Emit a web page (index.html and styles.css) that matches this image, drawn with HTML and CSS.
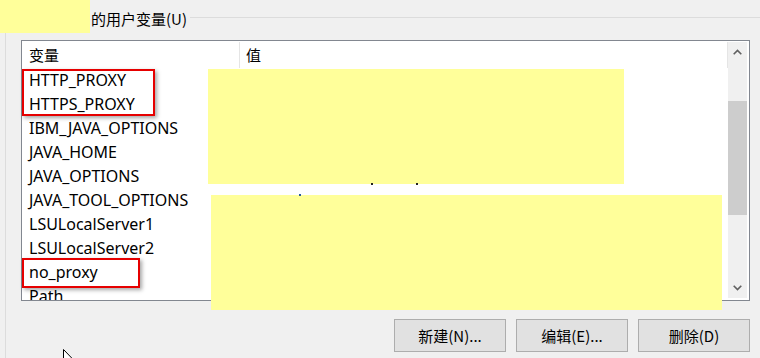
FILE: index.html
```html
<!DOCTYPE html>
<html lang="zh-CN">

<head>
    <meta charset="UTF-8">
    <meta name="viewport" content="width=device-width, initial-scale=1.0">
    <title>环境变量</title>
    <link rel="stylesheet" href="styles.css">
</head>

<body>
    <div class="screen">
        <div class="group">
            <div class="legend">的用户变量(U)</div>
            <div class="list">
                <div class="cols">
                    <div class="head">
                        <span class="c1">变量</span>
                        <span class="c2">值</span>
                    </div>
                    <ul class="rows">
                        <li>HTTP_PROXY</li>
                        <li>HTTPS_PROXY</li>
                        <li>IBM_JAVA_OPTIONS</li>
                        <li>JAVA_HOME</li>
                        <li>JAVA_OPTIONS</li>
                        <li>JAVA_TOOL_OPTIONS</li>
                        <li>LSULocalServer1</li>
                        <li>LSULocalServer2</li>
                        <li>no_proxy</li>
                        <li>Path</li>
                    </ul>
                </div>
                <div class="sb">
                    <div class="sb-btn">
                        <svg width="9" height="6" viewBox="0 0 9 6"><polyline points="0.7,5.3 4.5,1.5 8.3,5.3" fill="none" stroke="#606060" stroke-width="1.6"/></svg>
                    </div>
                    <div class="sb-track"><div class="sb-thumb"></div></div>
                    <div class="sb-btn">
                        <svg width="9" height="6" viewBox="0 0 9 6"><polyline points="0.7,0.7 4.5,4.5 8.3,0.7" fill="none" stroke="#606060" stroke-width="1.6"/></svg>
                    </div>
                </div>
            </div>
            <div class="btns">
                <button class="btn">新建(N)...</button>
                <button class="btn">编辑(E)...</button>
                <button class="btn">删除(D)</button>
            </div>
        </div>

        <!-- 遮挡块 -->
        <div class="mask m-name"></div>
        <div class="mask m-val1"></div>
        <div class="mask m-val2"></div>
        <span class="dot d1"></span>
        <span class="dot d2"></span>
        <span class="dot d3"></span>

        <!-- 红框标注 -->
        <div class="mark mark1"></div>
        <div class="mark mark2"></div>

        <svg class="cursor" width="13" height="20" viewBox="0 0 13 20">
            <path d="M0.5 0.5 L0.5 16 L4 12.6 L6.6 18.4 L9 17.3 L6.5 11.6 L11.2 11.6 Z" fill="#fff" stroke="#000" stroke-width="1"/>
        </svg>
    </div>
</body>

</html>
```

FILE: styles.css
```css
* {
    margin: 0;
    padding: 0;
    box-sizing: border-box;
}

body {
    background: #f0f0f0;
    font-family: "Noto Sans", "Noto Sans CJK SC", sans-serif;
    font-size: 15px;
    color: #000;
}

.screen {
    position: relative;
    width: 760px;
    height: 358px;
    overflow: hidden;
}

.group {
    position: relative;
    margin: 17px 0 0 5px;
    height: 341px;
    border-top: 1px solid #dcdcdc;
    border-left: 1px solid #dcdcdc;
}

.legend {
    position: absolute;
    top: -9px;
    left: 83px;
    height: 20px;
    line-height: 20px;
    padding: 0 3px 0 2px;
    background: #f0f0f0;
    font-family: "Noto Sans CJK SC", sans-serif;
}

.list {
    display: flex;
    width: 729px;
    height: 261px;
    margin: 22px 0 0 15px;
    border: 1px solid #828790;
    background: #fff;
    overflow: hidden;
}

.cols {
    flex: 1;
    overflow: hidden;
}

.head {
    display: flex;
    height: 27px;
}

.head span {
    margin-top: 1px;
    height: 26px;
    line-height: 26px;
    border-right: 1px solid #e5e5e5;
    font-family: "Noto Sans CJK SC", sans-serif;
}

.head .c1 {
    width: 218px;
    padding-left: 7px;
}

.head .c2 {
    flex: 1;
    padding-left: 6px;
}

.rows li {
    list-style: none;
    height: 24px;
    line-height: 25px;
    padding-left: 7px;
    font-size: 16px;
}

.sb {
    display: flex;
    flex-direction: column;
    width: 19px;
    margin: 1px 2px 2px 0;
    background: #f0f0f0;
}

.sb-btn {
    display: flex;
    align-items: center;
    justify-content: center;
    height: 20px;
}

.sb-track {
    flex: 1;
}

.sb-thumb {
    height: 114px;
    margin-top: 39px;
    background: #cdcdcd;
}

.btns {
    display: flex;
    justify-content: flex-end;
    gap: 10px;
    margin: 18px 10px 0 0;
}

.btn {
    width: 112px;
    height: 33px;
    border: 1px solid #adadad;
    background: #e1e1e1;
    font-family: "Noto Sans CJK SC", sans-serif;
    font-size: 15px;
    color: #000;
}

.mask {
    position: absolute;
    background: #ffff9a;
}

.m-name {
    left: 0;
    top: 0;
    width: 90px;
    height: 33px;
}

.m-val1 {
    left: 208px;
    top: 69px;
    width: 416px;
    height: 115px;
}

.m-val2 {
    left: 211px;
    top: 195px;
    width: 511px;
    height: 115px;
}

.dot {
    position: absolute;
    width: 2px;
    height: 2px;
    background: #222;
}

.d1 {
    left: 371px;
    top: 183px;
}

.d2 {
    left: 416px;
    top: 183px;
}

.d3 {
    left: 299px;
    top: 194px;
    background: #2a5a9a;
}

.mark {
    position: absolute;
    border: 2px solid #e60000;
    box-shadow: 2px 2px 4px rgba(0, 0, 0, 0.35);
}

.mark1 {
    left: 22px;
    top: 69px;
    width: 133px;
    height: 47px;
}

.mark2 {
    left: 22px;
    top: 258px;
    width: 118px;
    height: 30px;
}

.cursor {
    position: absolute;
    left: 63px;
    top: 349px;
}
```
